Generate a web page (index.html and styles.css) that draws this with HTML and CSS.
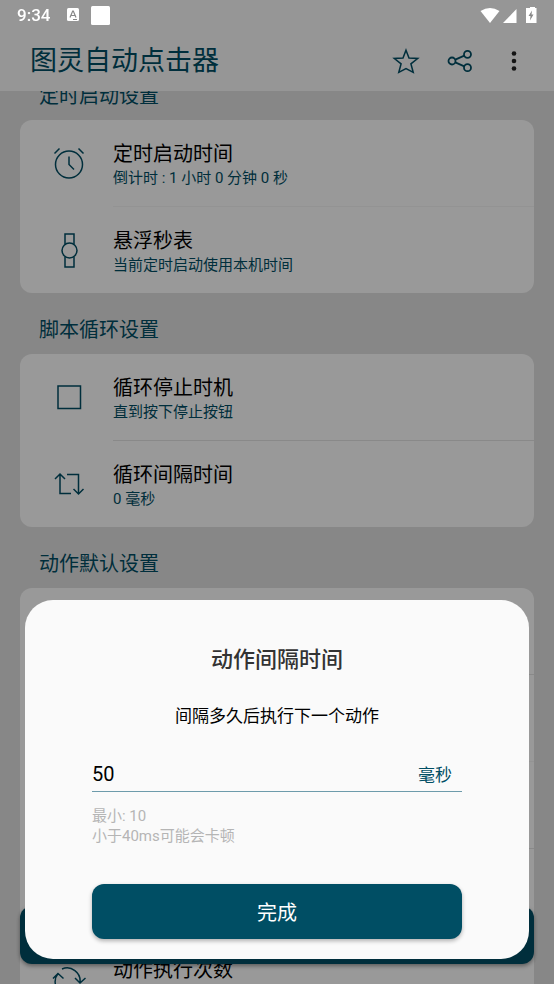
FILE: index.html
```html
<!DOCTYPE html>
<html lang="zh-CN">
<head>
<meta charset="utf-8">
<meta name="viewport" content="width=device-width, initial-scale=1">
<title>图灵自动点击器</title>
<link rel="stylesheet" href="styles.css">
</head>
<body>
<div class="app">
  <header class="app-bar">
    <h1>图灵自动点击器</h1>
    <nav class="actions">
      <button class="icon-button" type="button" aria-label="收藏">
        <svg width="28" height="28" viewBox="0 0 28 28" class="line"><path d="M14 3.200l3 7.900 8.700.4-6.800 5.300 2.300 8.500-7.200-3.800-7.200 3.800 2.300-8.500-6.800-5.300 8.700-.4z"/></svg>
      </button>
      <button class="icon-button" type="button" aria-label="分享">
        <svg width="28" height="28" viewBox="0 0 28 28" class="line bold"><circle cx="6" cy="14" r="3.500"/><circle cx="21.500" cy="7.300" r="3.500"/><circle cx="21.500" cy="20.700" r="3.500"/><path d="M9.300 12.600l9-3.900M9.300 15.400l9 3.900"/></svg>
      </button>
      <button class="icon-button" type="button" aria-label="更多">
        <svg width="28" height="28" viewBox="0 0 28 28" class="dots"><circle cx="14" cy="6.500" r="2.300"/><circle cx="14" cy="14" r="2.300"/><circle cx="14" cy="21.500" r="2.300"/></svg>
      </button>
    </nav>
  </header>

  <main class="settings">
    <h2>定时启动设置</h2>
    <ul class="card">
      <li class="row">
        <svg width="36" height="36" viewBox="0 0 36 36" class="line"><circle cx="18" cy="19.500" r="13.500"/><path d="M18 11.500v8l5 5M3.500 8.500l5-5M32.500 8.500l-5-5"/></svg>
        <div class="text faint"><h3>定时启动时间</h3><p>倒计时 : 1 小时 0 分钟 0 秒</p></div>
      </li>
      <li class="row">
        <svg width="36" height="36" viewBox="0 0 36 36" class="line"><circle cx="18.500" cy="18.500" r="7.500"/><path d="M14 12.500V2h9v10.500M14 24.500V35h9V24.500"/></svg>
        <div class="text"><h3>悬浮秒表</h3><p>当前定时启动使用本机时间</p></div>
      </li>
    </ul>

    <h2>脚本循环设置</h2>
    <ul class="card">
      <li class="row">
        <svg width="36" height="36" viewBox="0 0 36 36" class="line"><path d="M7 7h22.500v22.500H7z"/></svg>
        <div class="text"><h3>循环停止时机</h3><p>直到按下停止按钮</p></div>
      </li>
      <li class="row">
        <svg width="36" height="36" viewBox="0 0 36 36" class="line"><path d="M20 27.500H9V8.500M4 13l5-5 5 5M16 8.500h11.500v19M22.500 23l5 5 5-5"/></svg>
        <div class="text"><h3>循环间隔时间</h3><p>0 毫秒</p></div>
      </li>
    </ul>

    <h2>动作默认设置</h2>
    <ul class="card">
      <li class="row"><div class="text"></div></li>
      <li class="row"><div class="text faint"></div></li>
      <li class="row"><div class="text"></div></li>
      <li class="row"><div class="text"></div></li>
      <li class="row">
        <svg width="36" height="36" viewBox="0 0 36 36" class="line"><path d="M11 8a13 13 0 0 1 18 13.500M24 17l5 5 5.500-5M25 31A13 13 0 0 1 7 12.500M2 17.500l5-5 5.500 5"/></svg>
        <div class="text"><h3>动作执行次数</h3></div>
      </li>
    </ul>
  </main>
  <div class="bottom-action"></div>
</div>

<div class="scrim">
  <form class="dialog" role="dialog" aria-labelledby="dialog-title">
    <h2 id="dialog-title">动作间隔时间</h2>
    <label class="message" for="interval">间隔多久后执行下一个动作</label>
    <div class="field">
      <input id="interval" type="text" inputmode="numeric" value="50">
      <span class="unit">毫秒</span>
    </div>
    <p class="hint">最小: 10<br>小于40ms可能会卡顿</p>
    <button class="done" type="button">完成</button>
  </form>
</div>

<div class="status-bar">
  <span class="clock">9:34</span>
  <svg width="12" height="14" viewBox="0 0 12 14"><rect width="12" height="13" rx="1.500" fill="#fff"/><path d="M3 9.500L5.700 3h.6L9 9.500M4 7.500h4M6 11.500h4" fill="none" stroke="#888" stroke-width="1.200"/></svg>
  <svg width="19" height="19" viewBox="0 0 19 19"><rect width="19" height="19" rx="1.500" fill="#fff"/></svg>
  <span class="spacer"></span>
  <svg width="60" height="18" viewBox="0 0 60 18" fill="#fff"><path d="M2.500 5Q12 -1 21.500 5L12 17z"/><path d="M38.500 3v14H25z"/><path d="M51 2h2V1h5v1h1.500v15H49V2z" transform="translate(-1 0)"/><path d="M54 4.500l-3.500 5.500h2l-.5 4.500 3.500-6h-2z" fill="#888"/></svg>
</div>
</body>
</html>
```
FILE: styles.css
```css
* { box-sizing: border-box; }

:root {
  --teal: #004e64;
  --gutter: 20px;
}

body, h1, h2, h3, p, ul { margin: 0; padding: 0; }

body {
  font-family: Roboto, "Noto Sans CJK SC", sans-serif;
  color: #000;
}

h1, h2, h3 { font-weight: 400; }
button, input { font: inherit; border: 0; padding: 0; background: none; }

.app {
  height: 100vh;
  display: flex;
  flex-direction: column;
  overflow: hidden;
  background: #e2e2e2;
}

/* App bar */
.app-bar {
  flex: none;
  display: flex;
  align-items: center;
  justify-content: space-between;
  padding: 40px 13px 9px 30px;
  background: #fafafa;
}

.app-bar h1 {
  font-size: 27px;
  line-height: 42px;
  color: var(--teal);
}

.actions { display: flex; }

.icon-button {
  width: 54px;
  height: 42px;
  display: grid;
  place-items: center;
}

.line {
  fill: none;
  stroke: var(--teal);
  stroke-width: 1.500;
}

.line.bold { stroke-width: 1.800; }
.dots { fill: #222; }

/* Settings list, scrolled part way past its first heading */
.settings {
  flex: 1;
  min-height: 0;
  overflow: hidden;
  padding: 0 var(--gutter);
}

.settings h2 {
  padding: 23px 19px 10px;
  font-size: 20px;
  line-height: 28px;
  color: var(--teal);
}

.settings h2:first-child { margin-top: -32px; }

.card {
  list-style: none;
  border-radius: 12px;
  background: #fff;
}

.row {
  display: grid;
  grid-template-columns: 36px 1fr;
  column-gap: 26px;
  padding-left: 31px;
}

.row svg { margin-top: 25px; }

.text {
  grid-column: 2;
  height: 87px;
  padding-top: 21px;
  border-bottom: 1px solid #e4e4e4;
}

.text.faint { border-color: #f5f5f5; }

.row:last-child .text {
  height: 86px;
  border-bottom: 0;
}

.text h3 {
  font-size: 20px;
  line-height: 26px;
}

.text p {
  font-size: 15px;
  line-height: 22px;
  color: var(--teal);
}

.bottom-action {
  position: fixed;
  left: var(--gutter);
  right: var(--gutter);
  bottom: 20px;
  height: 58px;
  border-radius: 12px;
  background: var(--teal);
  box-shadow: 0 2px 4px rgba(0, 0, 0, .4);
}

/* Dialog */
.scrim {
  position: fixed;
  inset: 0;
  display: flex;
  align-items: flex-end;
  padding: 25px;
  background: rgba(0, 0, 0, .4);
}

.dialog {
  flex: 1;
  display: flex;
  flex-direction: column;
  padding: 44px 67px 20px;
  border-radius: 28px;
  background: #fafafa;
}

.dialog h2 {
  font-size: 22px;
  font-weight: 500;
  line-height: 32px;
  text-align: center;
  color: #333;
}

.message {
  margin-top: 24px;
  font-size: 17px;
  line-height: 32px;
  text-align: center;
}

.field {
  display: flex;
  align-items: center;
  height: 36px;
  margin-top: 24px;
  padding-right: 10px;
  border-bottom: 1px solid #6d9bab;
}

.field input {
  flex: 1;
  min-width: 0;
  font-size: 20px;
  outline: 0;
}

.unit {
  font-size: 17px;
  color: var(--teal);
}

.hint {
  margin-top: 14px;
  font-size: 15px;
  line-height: 20px;
  color: #b5b5b5;
}

.done {
  height: 55px;
  margin-top: 38px;
  border-radius: 12px;
  background: var(--teal);
  color: #fff;
  font-size: 20px;
  box-shadow: 0 2px 4px rgba(0, 0, 0, .3);
}

/* System status bar */
.status-bar {
  position: fixed;
  top: 0;
  left: 0;
  right: 0;
  display: flex;
  align-items: center;
  height: 30px;
  padding: 0 16px 0 17px;
  color: #fff;
}

.clock {
  margin-right: 17px;
  font-size: 17px;
  font-weight: 500;
}

.status-bar svg { margin-right: 12px; }
.status-bar svg:last-child { margin-right: 0; }
.spacer { flex: 1; }
```
